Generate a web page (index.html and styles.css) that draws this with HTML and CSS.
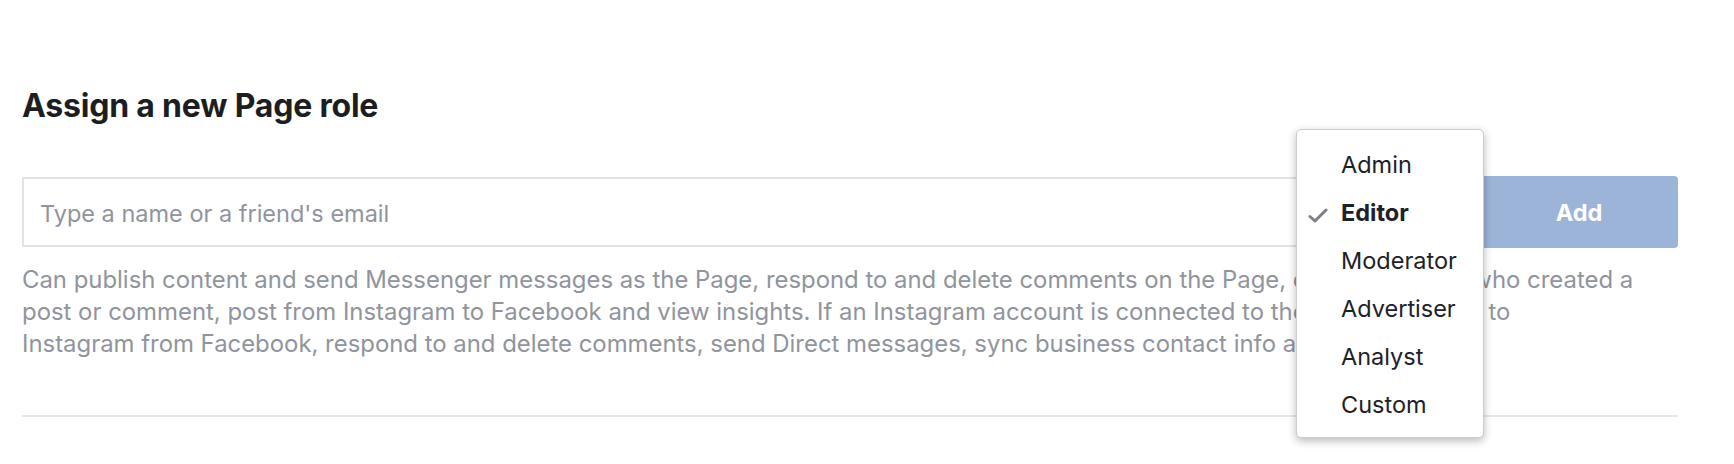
FILE: index.html
```html
<!DOCTYPE html>
<html>
<head>
<meta charset="utf-8">
<link rel="stylesheet" href="styles.css">
</head>
<body>
<div class="panel">
  <h2 class="title">Assign a new Page role</h2>
  <div class="add-row">
    <input class="name-input" type="text" placeholder="Type a name or a friend's email">
    <button class="add-btn">Add</button>
    <div class="role-menu">
      <div class="role-item">Admin</div>
      <div class="role-item selected">
        <svg class="check" width="20" height="16" viewBox="0 0 20 16"><path d="M2 9.5 L7 14 L18 3" fill="none" stroke="#7d8087" stroke-width="3" stroke-linecap="round" stroke-linejoin="round"/></svg>
        Editor</div>
      <div class="role-item">Moderator</div>
      <div class="role-item">Advertiser</div>
      <div class="role-item">Analyst</div>
      <div class="role-item">Custom</div>
    </div>
  </div>
  <p class="desc">Can publish content and send Messenger messages as the Page, respond to and delete comments on the Page, create ads, see who created a post or comment, post from Instagram to Facebook and view insights. If an Instagram account is connected to the Page, can post to<br>Instagram from Facebook, respond to and delete comments, send Direct messages, sync business contact info and create ads.</p>
  <div class="divider"></div>
</div>
</body>
</html>
```

FILE: styles.css
```css
html, body {
  margin: 0;
  padding: 0;
  background: #ffffff;
  min-height: 464px;
}
body {
  font-family: Inter, "Noto Sans", "Liberation Sans", sans-serif;
}
.panel {
  min-height: 464px;
  box-sizing: border-box;
  padding-left: 22px;
  padding-top: 87px;
  width: 1678px;
}
.title {
  margin: 0;
  font-size: 32px;
  line-height: 38px;
  font-weight: 700;
  color: #1c1e21;
  letter-spacing: -0.2px;
}
.add-row {
  position: relative;
  display: flex;
  gap: 10px;
  margin-top: 52px;
  height: 70px;
}
.name-input {
  flex: 1;
  box-sizing: border-box;
  height: 70px;
  border: 2px solid #e2e3e6;
  border-radius: 0;
  padding: 2px 0 0 16px;
  font-family: inherit;
  font-size: 23.5px;
  color: #1c1e21;
  outline: none;
  background: #fff;
}
.name-input::placeholder {
  color: #90949c;
}
.add-btn {
  width: 198px;
  height: 72px;
  margin-top: -1px;
  border: none;
  border-radius: 4px;
  background: #9cb4d8;
  color: #ffffff;
  font-family: inherit;
  font-size: 23.5px;
  font-weight: 700;
}
.role-menu {
  position: absolute;
  top: -48px;
  right: 194px;
  width: 188px;
  box-sizing: border-box;
  height: 309px;
  padding-top: 11px;
  background: #ffffff;
  border: 1px solid #c9ccd1;
  border-radius: 5px;
  box-shadow: 0 3px 8px rgba(0, 0, 0, 0.28);
  z-index: 2;
}
.role-item {
  position: relative;
  height: 48px;
  line-height: 48px;
  padding-left: 44px;
  font-size: 23.5px;
  color: #1d2129;
}
.role-item.selected {
  font-weight: 700;
}
.check {
  position: absolute;
  left: 11px;
  top: 18px;
}
.desc {
  margin: 17px 0 0 0;
  max-width: 1620px;
  font-size: 23.9px;
  line-height: 32px;
  color: #90949c;
  letter-spacing: 0;
}
.divider {
  margin-top: 55px;
  height: 2px;
  background: #e6e7ea;
}
```
